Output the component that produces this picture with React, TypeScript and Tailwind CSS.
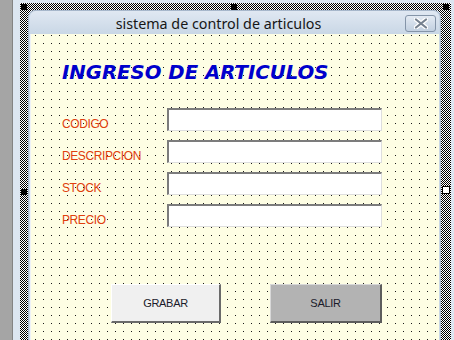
import React from 'react';

const hatch =
  'bg-[image:repeating-conic-gradient(#000_0_25%,#fff_0_50%)] bg-[length:2px_2px]';

const fields = ['CODIGO', 'DESCRIPCION', 'STOCK', 'PRECIO'];

const CloseGlyph = () => (
  <svg width="14" height="11" viewBox="0 0 14 11">
    <path d="M2 1.5 L12 9.5 M12 1.5 L2 9.5" stroke="#ffffff" strokeWidth="4.5" strokeLinecap="round" />
    <path d="M2 1.5 L12 9.5 M12 1.5 L2 9.5" stroke="#76818f" strokeWidth="2.2" strokeLinecap="round" />
  </svg>
);

export default function App() {
  return (
    <div className="flex w-[454px] h-[340px] overflow-hidden bg-[#dce6f1] font-['Liberation_Sans',Arial,sans-serif]">
      {/* gray side of the designer */}
      <div className="w-[13px] h-full shrink-0 bg-[#a5a5a5] border-r border-[#838383]" />
      <div className="w-[7px] h-full shrink-0" />

      {/* selection frame */}
      <div className="relative mt-[3px] w-[431px] shrink-0 flex flex-col">
        <div className={`flex-1 flex flex-col pl-[8px] pr-[10px] pt-[7px] ${hatch}`}>
          <div className="flex-1 flex flex-col rounded-t-[7px] bg-[#c9d7e6] border border-[#a7b7cb] border-b-0 px-[1px]">
            {/* title bar */}
            <div className="h-[23px] shrink-0 flex items-center relative rounded-t-[6px] bg-gradient-to-b from-[#e0e8f2] to-[#c9d7e6]">
              <div className="flex-1 text-center text-[14.3px] text-[#161616] font-['Noto_Sans',sans-serif] leading-[20px] pr-[32px] pt-[2px]">
                sistema de control de articulos
              </div>
              <div className="absolute right-[3px] top-[4px] w-[31px] h-[17px] rounded-[3px] border border-[#8494a8] bg-gradient-to-b from-[#e3eaf3] to-[#c2d0e0] flex items-center justify-center">
                <CloseGlyph />
              </div>
            </div>

            {/* client area */}
            <div className="flex-1 flex flex-col bg-[#fefee4] bg-[image:conic-gradient(from_270deg_at_1px_1px,#1a1a1a_25%,transparent_0)] bg-[length:8px_8px] bg-[position:4px_1px] border-l border-[#eef2f7]">
              <div className="pl-[31px] pt-[28px] h-[74px]">
                <div className="text-[19.7px] leading-[22px] font-bold italic text-[#0000cc] font-['DejaVu_Sans',Verdana,sans-serif]">
                  INGRESO DE ARTICULOS
                </div>
              </div>

              <div className="flex flex-col gap-[9px] pl-[31px]">
                {fields.map((f) => (
                  <div key={f} className="flex h-[23px]">
                    <div className="w-[105px] pt-[9px] text-[12px] leading-[14px] tracking-[-0.4px] text-[#e0400e]">{f}</div>
                    <div className="w-[215px] h-[23px] bg-white border-t-2 border-l-2 border-[#7c7c7c] border-b border-r border-b-[#dedede] border-r-[#dedede]" />
                  </div>
                ))}
              </div>

              <div className="flex gap-[49px] pl-[80px] mt-[57px]">
                <div className="w-[110px] h-[39px] flex items-center justify-center bg-[#f0f0f0] border-t border-l border-[#ffffff] border-b-2 border-r-2 border-b-[#6a6a6a] border-r-[#6a6a6a] text-[11px] tracking-[-0.3px] text-[#1a1a2a]">
                  GRABAR
                </div>
                <div className="w-[112px] h-[39px] flex items-center justify-center bg-[#b3b3b3] border-t border-l border-[#d8d8d8] border-b-2 border-r-2 border-b-[#5c5c5c] border-r-[#5c5c5c] text-[11px] tracking-[-0.3px] text-[#1a1a2a]">
                  SALIR
                </div>
              </div>
            </div>
          </div>
        </div>

        {/* grab handles */}
        <div className="absolute left-[1px] top-[1px] w-[6px] h-[6px] bg-black" />
        <div className="absolute left-[211px] top-[1px] w-[6px] h-[6px] bg-black" />
        <div className="absolute left-[423px] top-[1px] w-[6px] h-[6px] bg-black" />
        <div className="absolute left-[1px] top-[186px] w-[6px] h-[6px] bg-black" />
        <div className="absolute left-[422px] top-[183px] w-[8px] h-[8px] bg-white border border-black" />
      </div>
    </div>
  );
}
